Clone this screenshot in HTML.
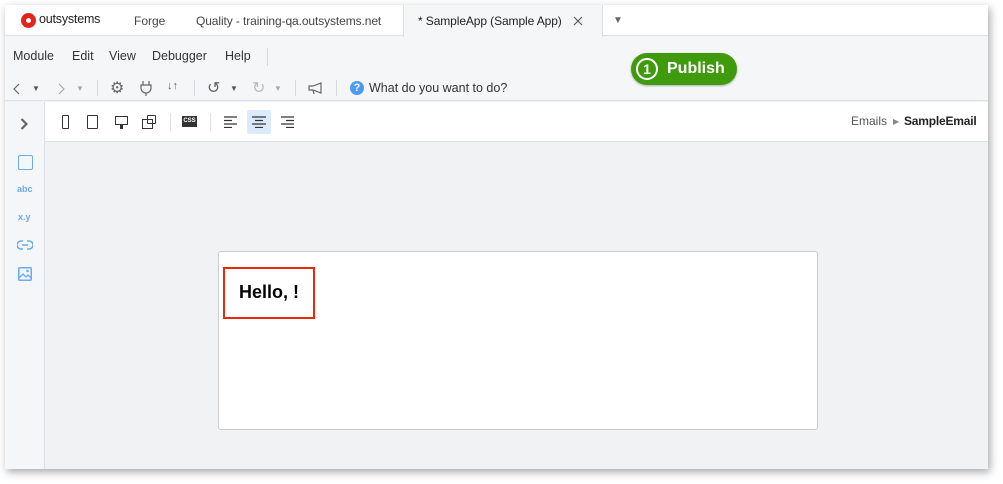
<!DOCTYPE html>
<html><head><style>
*{box-sizing:border-box;margin:0;padding:0}
body{width:1003px;height:484px;background:#fff;font-family:"Liberation Sans",sans-serif;position:relative;overflow:hidden;color:#333}
.win{position:absolute;left:5px;top:5px;width:983px;height:464px;background:#f1f2f4;box-shadow:2px 3px 8px rgba(0,0,0,.35)}
.abs{position:absolute}
.t{position:absolute;font-size:12.5px;color:#444;white-space:nowrap}
.ic{position:absolute}
</style></head><body>
<div class="win">
 <div class="abs" style="left:0;top:0;width:983px;height:31px;background:#fff;border-bottom:1px solid #dde0e4"></div>
 <div class="abs" style="left:398px;top:0;width:200px;height:32px;background:#f5f6f8;border-left:1px solid #dde0e4;border-right:1px solid #dde0e4"></div>
 <div class="abs" style="left:0;top:32px;width:983px;height:64px;background:#f5f6f8;border-bottom:1px solid #dde0e4"></div>
 <div class="abs" style="left:0;top:97px;width:983px;height:40px;background:#fff;border-bottom:1px solid #dde0e4"></div>
 <div class="abs" style="left:0;top:97px;width:40px;height:367px;background:#f5f6f8;border-right:1px solid #dde0e4"></div>
</div>
<!-- tabs -->
<div class="abs" style="left:21px;top:13px;width:15px;height:15px;border-radius:50%;background:#e5231b"></div>
<div class="abs" style="left:26px;top:18px;width:5px;height:5px;border-radius:50%;background:#fff"></div>
<div class="t" style="left:39px;top:12px;font-size:12.5px;color:#222;letter-spacing:-0.2px">outsystems</div>
<div class="t" style="left:134px;top:14px;font-size:12px">Forge</div>
<div class="t" style="left:196px;top:14px;font-size:12px;letter-spacing:-0.1px">Quality - training-qa.outsystems.net</div>
<div class="t" style="left:418px;top:14px;font-size:12px;color:#222;letter-spacing:-0.1px">* SampleApp (Sample App)</div>
<svg class="ic" style="left:573px;top:16px" width="10" height="10"><path d="M1 1l8 8M9 1l-8 8" stroke="#555" stroke-width="1.1"/></svg>
<div class="t" style="left:613px;top:15px;font-size:10px;color:#666">▼</div>
<!-- menu -->
<div class="t" style="left:13px;top:49px;color:#333">Module</div>
<div class="t" style="left:72px;top:49px;color:#333">Edit</div>
<div class="t" style="left:109px;top:49px;color:#333">View</div>
<div class="t" style="left:152px;top:49px;color:#333">Debugger</div>
<div class="t" style="left:225px;top:49px;color:#333">Help</div>
<div class="abs" style="left:267px;top:48px;width:1px;height:18px;background:#d5d8dc"></div>
<!-- toolbar row -->
<svg class="ic" style="left:13px;top:83px" width="8" height="12"><path d="M6 1L1 6l5 5" stroke="#666" fill="none" stroke-width="1.2"/></svg>
<div class="t" style="left:32px;top:84px;font-size:8px;color:#555">▼</div>
<svg class="ic" style="left:58px;top:83px" width="8" height="12"><path d="M1 1l5 5-5 5" stroke="#aaa" fill="none" stroke-width="1.2"/></svg>
<div class="t" style="left:76px;top:84px;font-size:8px;color:#aaa">▼</div>
<div class="abs" style="left:97px;top:80px;width:1px;height:16px;background:#d5d8dc"></div>
<div class="t" style="left:110px;top:78px;font-size:16px;color:#666">⚙</div>
<svg class="ic" style="left:139px;top:80px" width="14" height="16"><path d="M4 1v4M10 1v4M2 5h10v3a5 5 0 0 1-10 0zM7 13v3" stroke="#666" fill="none" stroke-width="1.2"/></svg>
<div class="t" style="left:167px;top:80px;font-size:11px;color:#666">↓↑</div>
<div class="abs" style="left:194px;top:80px;width:1px;height:16px;background:#d5d8dc"></div>
<div class="t" style="left:207px;top:78px;font-size:16px;color:#666">↺</div>
<div class="t" style="left:230px;top:84px;font-size:8px;color:#555">▼</div>
<div class="t" style="left:252px;top:78px;font-size:16px;color:#bbb">↻</div>
<div class="t" style="left:274px;top:84px;font-size:8px;color:#aaa">▼</div>
<div class="abs" style="left:295px;top:80px;width:1px;height:16px;background:#d5d8dc"></div>
<svg class="ic" style="left:308px;top:81px" width="16" height="14"><path d="M1 5h4l8-3v10l-8-3H1zM5 9l1 4" stroke="#666" fill="none" stroke-width="1.2"/></svg>
<div class="abs" style="left:336px;top:80px;width:1px;height:16px;background:#d5d8dc"></div>
<div class="abs" style="left:350px;top:81px;width:14px;height:14px;border-radius:50%;background:#4a9cf0;color:#fff;font-size:11px;font-weight:bold;text-align:center;line-height:14px">?</div>
<div class="t" style="left:369px;top:81px;color:#333">What do you want to do?</div>
<!-- publish -->
<div class="abs" style="left:631px;top:53px;width:106px;height:32px;border-radius:16px;background:#3f9b0b;box-shadow:0 1px 2px rgba(0,0,0,.3)"></div>
<div class="abs" style="left:636px;top:58px;width:22px;height:22px;border-radius:50%;border:2px solid #fff;color:#fff;font-size:14px;font-weight:bold;text-align:center;line-height:18px">1</div>
<div class="t" style="left:667px;top:60px;color:#fff;font-size:16px;font-weight:bold">Publish</div>
<!-- second toolbar -->
<svg class="ic" style="left:20px;top:118px" width="8" height="12"><path d="M1.5 1l5 5-5 5" stroke="#666" fill="none" stroke-width="2.2"/></svg>
<div class="abs" style="left:62px;top:115px;width:7px;height:14px;border:1.5px solid #333;border-radius:1px"></div>
<div class="abs" style="left:87px;top:115px;width:11px;height:14px;border:1.5px solid #333;border-radius:1px"></div>
<div class="abs" style="left:115px;top:116px;width:13px;height:9px;border:1.5px solid #333"></div>
<div class="abs" style="left:120px;top:125px;width:3px;height:4px;background:#333"></div>
<div class="abs" style="left:142px;top:119px;width:11px;height:10px;border:1.5px solid #333"></div>
<div class="abs" style="left:147px;top:115px;width:9px;height:9px;border:1.5px solid #333;border-radius:1px"></div>
<div class="abs" style="left:170px;top:113px;width:1px;height:18px;background:#dde0e4"></div>
<div class="abs" style="left:182px;top:116px;width:15px;height:11px;background:#333;color:#fff;font-size:6px;font-weight:bold;text-align:center;line-height:11px">CSS</div>
<div class="abs" style="left:210px;top:113px;width:1px;height:18px;background:#dde0e4"></div>
<div class="abs" style="left:247px;top:110px;width:24px;height:24px;background:#dcebfb;border-radius:2px"></div>
<svg class="ic" style="left:224px;top:116px" width="70" height="12"><path d="M0 1h13M0 4.5h8M0 8h13M0 11.5h8M28 1h14M31 4.5h8M28 8h14M31 11.5h8M57 1h13M62 4.5h8M57 8h13M62 11.5h8" stroke="#333" stroke-width="1.2"/></svg>
<div class="t" style="left:851px;top:114px;color:#555;font-size:12px">Emails</div>
<div class="t" style="left:893px;top:117px;font-size:8px;color:#888">▶</div>
<div class="t" style="left:904px;top:114px;color:#222;font-weight:bold;font-size:12px;letter-spacing:-0.2px">SampleEmail</div>
<!-- sidebar icons -->
<div class="abs" style="left:18px;top:155px;width:15px;height:15px;border:1.5px solid #6aaaf0;border-radius:2px"></div>
<div class="t" style="left:17px;top:184px;font-size:9px;font-weight:bold;color:#6aaaf0">abc</div>
<div class="t" style="left:18px;top:212px;font-size:9px;font-weight:bold;color:#6aaaf0">x.y</div>
<svg class="ic" style="left:17px;top:240px" width="16" height="10"><path d="M6 1H4a4 4 0 0 0 0 8h2M10 1h2a4 4 0 0 1 0 8h-2M5 5h6" stroke="#6aaaf0" fill="none" stroke-width="1.5"/></svg>
<svg class="ic" style="left:18px;top:267px" width="14" height="14"><rect x=".75" y=".75" width="12.5" height="12.5" rx="1" stroke="#6aaaf0" fill="none" stroke-width="1.5"/><path d="M1 11l4-4 3 3 2-2 3 3" stroke="#6aaaf0" fill="none" stroke-width="1.3"/><circle cx="9.5" cy="4" r="1.3" fill="#6aaaf0"/></svg>
<!-- card -->
<div class="abs" style="left:218px;top:251px;width:600px;height:179px;background:#fff;border:1px solid #ccc;border-radius:3px"></div>
<div class="abs" style="left:223px;top:267px;width:92px;height:52px;border:2px solid #e8290c"></div>
<div class="t" style="left:239px;top:282px;font-size:18px;font-weight:bold;color:#000">Hello, !</div>
</body></html>
